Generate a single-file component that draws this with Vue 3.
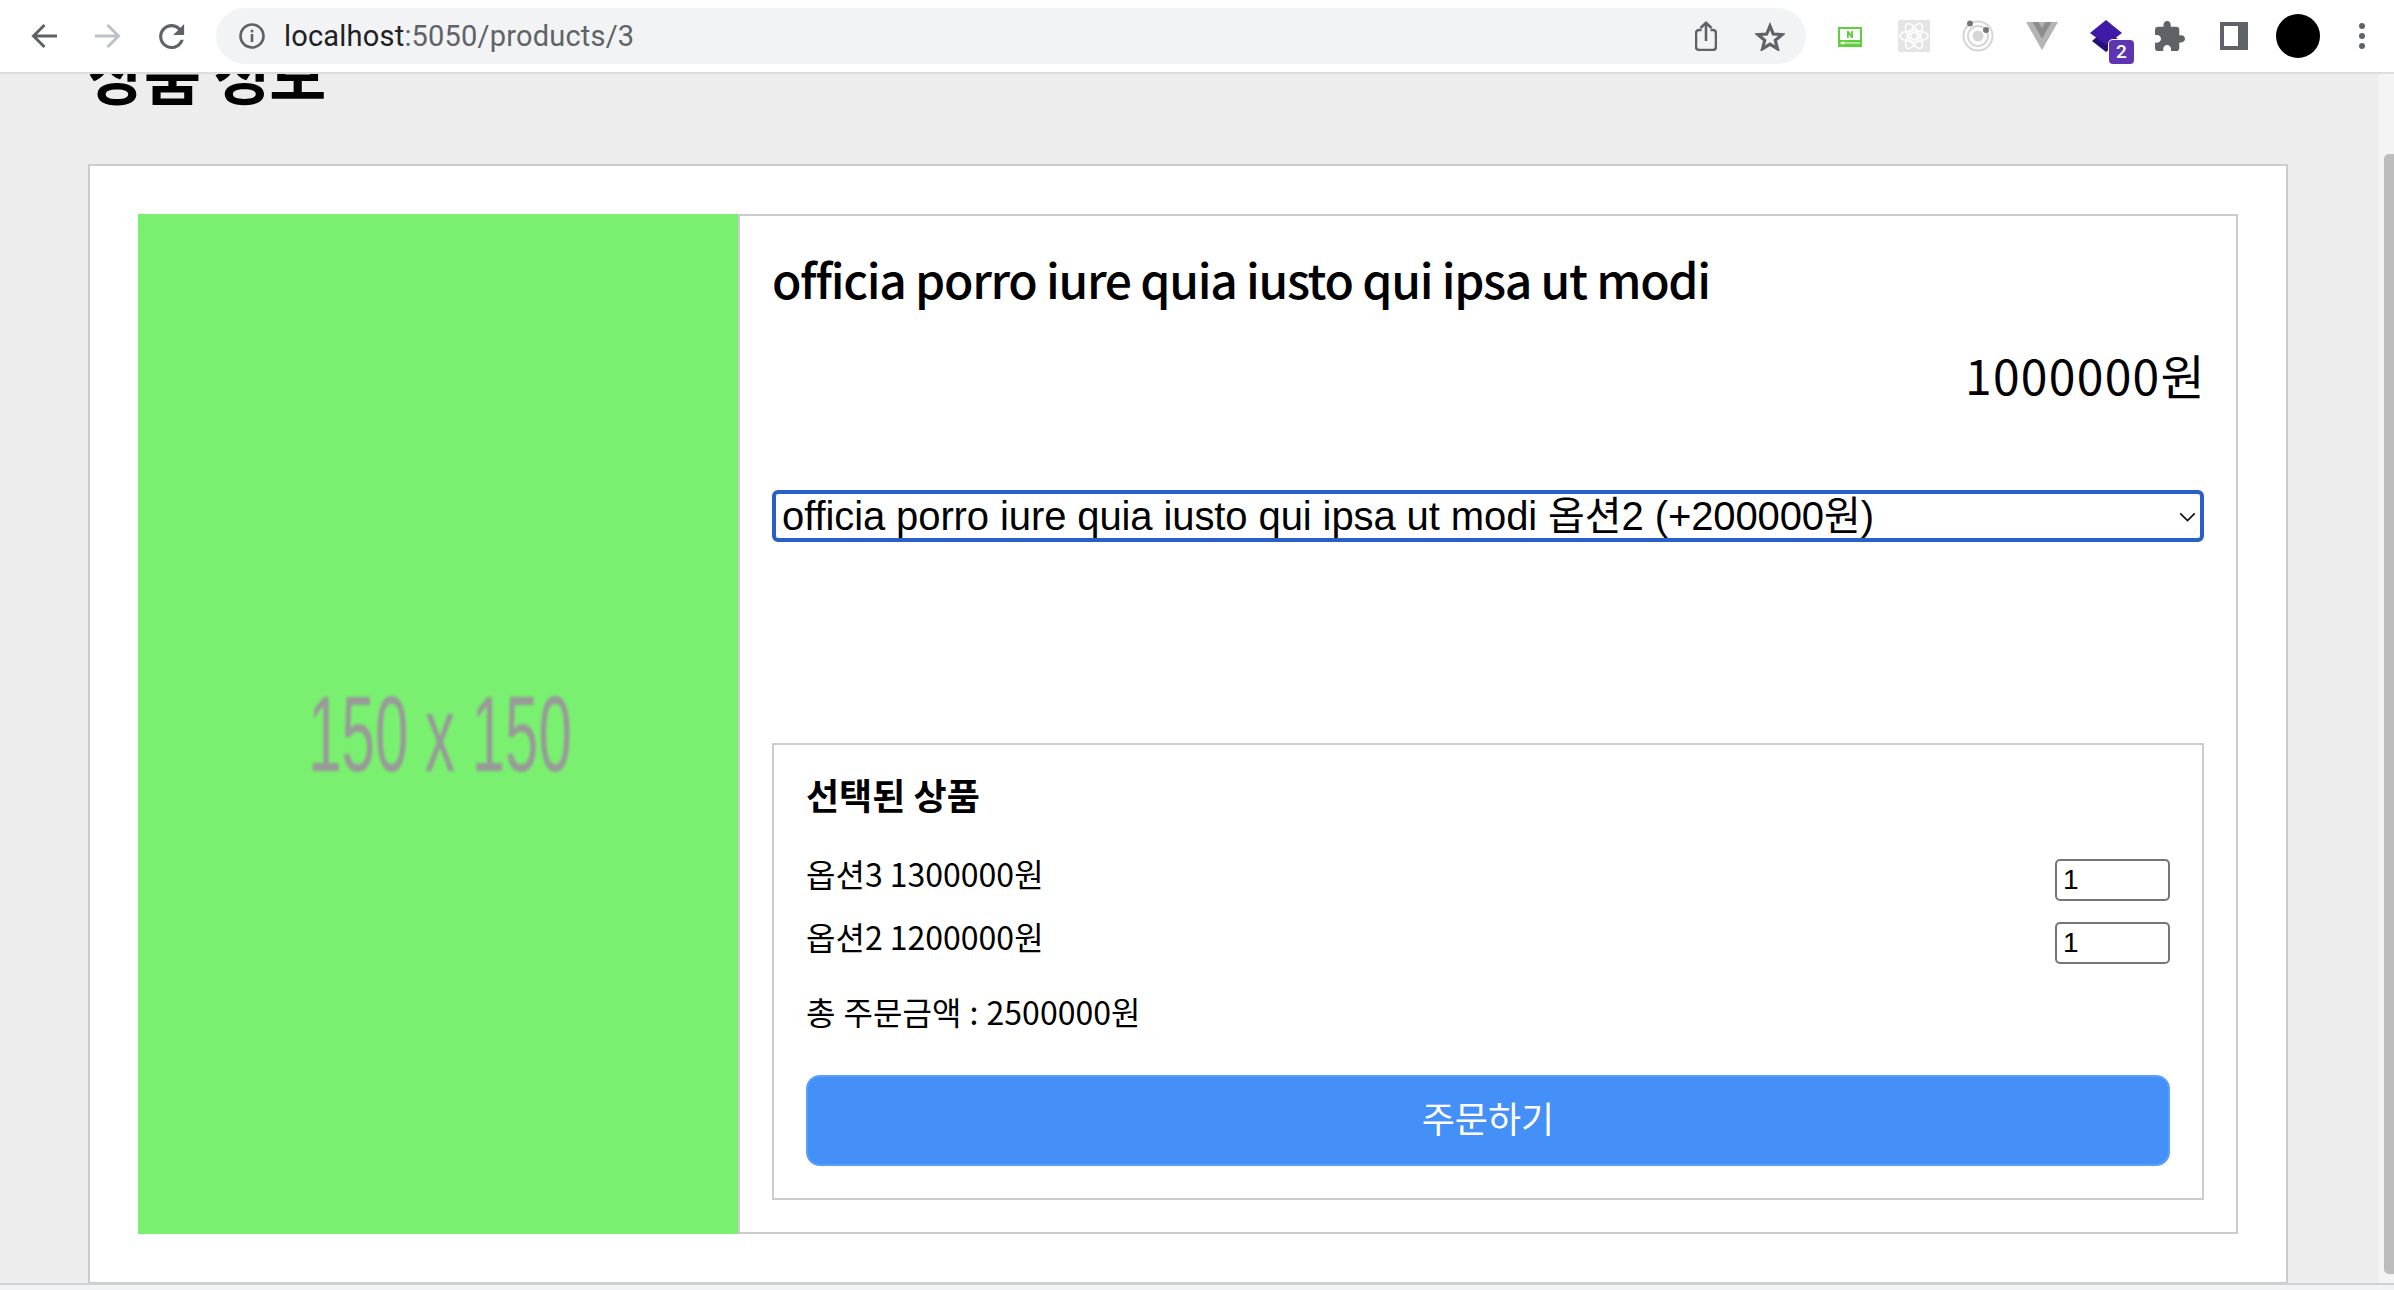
<script setup>
const rows = [
  { name: '옵션3 1300000원', qty: 1 },
  { name: '옵션2 1200000원', qty: 1 },
]
</script>

<template>
  <div class="app">
    <header class="toolbar">
      <div class="nav">
        <svg class="ic-arrow" viewBox="0 0 26 26"><path d="M26 13H3M13.500 2 2.500 13l11 11" fill="none" stroke="#5f6368" stroke-width="3"/></svg>
        <svg class="ic-arrow" viewBox="0 0 26 26"><path d="M0 13h23M12.500 2l11 11-11 11" fill="none" stroke="#bdc1c6" stroke-width="3"/></svg>
        <svg class="ic-reload" viewBox="4 4 16.500 16"><path fill="#5f6368" d="M17.650 6.350C16.200 4.900 14.210 4 12 4c-4.420 0-7.990 3.580-7.990 8s3.570 8 7.990 8c3.730 0 6.840-2.550 7.730-6h-2.080c-.82 2.330-3.040 4-5.650 4-3.310 0-6-2.690-6-6s2.690-6 6-6c1.660 0 3.140.69 4.220 1.780L13 11h7V4l-2.350 2.350z"/></svg>
      </div>
      <div class="omnibox">
        <svg class="ic-info" viewBox="0 0 26 26"><circle cx="13" cy="13" r="11.500" fill="none" stroke="#5f6368" stroke-width="2.600"/><rect x="11.700" y="11" width="2.600" height="8" fill="#5f6368"/><rect x="11.700" y="6.800" width="2.600" height="2.600" fill="#5f6368"/></svg>
        <span class="url"><span class="host">localhost</span>:5050/products/3</span>
        <svg class="ic-share" viewBox="0 0 22 30"><path d="M6.500 9H4a3 3 0 0 0-3 3v14a3 3 0 0 0 3 3h14a3 3 0 0 0 3-3V12a3 3 0 0 0-3-3h-2.500M11 20V2M5.500 7 11 1.800 16.500 7" fill="none" stroke="#5f6368" stroke-width="2.600"/></svg>
        <svg class="ic-star" viewBox="0 0 30 29"><path d="M15 4l3.300 8 8.900.6-6.900 5.700 2.200 8.500-7.500-4.700-7.500 4.700 2.200-8.500-6.900-5.700 8.900-.6z" fill="none" stroke="#5f6368" stroke-width="3.200"/></svg>
      </div>
      <div class="extensions">
        <svg class="ic-naver" viewBox="0 0 24 20"><rect x="1" y="1" width="22" height="18" fill="#fff" stroke="#5fcf3e" stroke-width="2"/><rect x="0" y="13" width="24" height="7" fill="#5fcf3e"/><rect x="2" y="15.500" width="20" height="1" fill="#fff"/><circle cx="5" cy="16" r="1.500" fill="#fff"/><path d="M9 11V4h1.800l2.400 3.600V4H15v7h-1.800l-2.400-3.600V11z" fill="#5fcf3e"/></svg>
        <svg class="ic-ext" viewBox="0 0 32 32"><rect width="32" height="32" rx="2" fill="#e4e4e4"/><g fill="none" stroke="#fff" stroke-width="1.600"><ellipse cx="16" cy="16" rx="14" ry="5.500"/><ellipse cx="16" cy="16" rx="14" ry="5.500" transform="rotate(60 16 16)"/><ellipse cx="16" cy="16" rx="14" ry="5.500" transform="rotate(120 16 16)"/><circle cx="16" cy="16" r="3.500"/></g></svg>
        <svg class="ic-ext" viewBox="0 0 32 32"><circle cx="16" cy="16" r="14.500" fill="none" stroke="#d6d6d6" stroke-width="2"/><circle cx="16" cy="16" r="10" fill="none" stroke="#d6d6d6" stroke-width="2"/><circle cx="16" cy="16" r="5.500" fill="#d6d6d6"/><circle cx="8" cy="3.500" r="3" fill="#777"/><circle cx="24" cy="10" r="3" fill="#777"/></svg>
        <svg class="ic-vue" viewBox="0 0 32 28"><path d="M0 0h32L16 28z" fill="#b4b4b4"/><path d="M6.500 0h6L16 6l3.500-6h6L16 16.500z" fill="#8d8d8d"/></svg>
        <div class="ic-apollo">
          <svg viewBox="0 0 32 32"><path d="M16 9 30 21 16 32 2 21z" fill="#24107c"/><path d="M16 0 32 13 16 25 0 13z" fill="#3f1aa6"/></svg>
          <span class="badge">2</span>
        </div>
        <svg class="ic-puzzle" viewBox="2 1 21 21"><path fill="#5f6368" d="M20.500 11H19V7c0-1.100-.9-2-2-2h-4V3.500C13 2.120 11.880 1 10.500 1S8 2.120 8 3.500V5H4c-1.100 0-1.990.9-1.990 2v3.800H3.500c1.490 0 2.700 1.210 2.700 2.700s-1.210 2.700-2.700 2.700H2V20c0 1.100.9 2 2 2h3.800v-1.500c0-1.490 1.210-2.700 2.700-2.700 1.490 0 2.700 1.210 2.700 2.700V22H17c1.100 0 2-.9 2-2v-4h1.500c1.380 0 2.500-1.120 2.500-2.500S21.880 11 20.500 11z"/></svg>
        <div class="ic-panel"></div>
        <div class="avatar"></div>
        <div class="kebab"><i></i><i></i><i></i></div>
      </div>
    </header>

    <main class="viewport">
      <div class="page">
        <h1 class="heading">상품 정보</h1>
        <section class="panel">
          <div class="card">
            <div class="thumb"><span class="thumb-text">150 x 150</span></div>
            <div class="detail">
              <h2 class="title">officia porro iure quia iusto qui ipsa ut modi</h2>
              <p class="price">1000000원</p>
              <div class="select-wrap">
                <select class="select">
                  <option>officia porro iure quia iusto qui ipsa ut modi 옵션2 (+200000원)</option>
                </select>
                <svg class="chevron" viewBox="0 0 14 8"><path d="M1 1l6 6 6-6" fill="none" stroke="#111" stroke-width="1.400"/></svg>
              </div>
              <div class="selected">
                <h3 class="selected-title">선택된 상품</h3>
                <div v-for="row in rows" :key="row.name" class="row">
                  <span class="row-name">{{ row.name }}</span>
                  <input class="qty" type="text" :value="row.qty" />
                </div>
                <p class="total">총 주문금액 : 2500000원</p>
                <button class="order" type="button">주문하기</button>
              </div>
            </div>
          </div>
        </section>
      </div>
      <div class="scrollbar"><div class="thumbbar"></div></div>
    </main>
    <div class="bottom-edge"></div>
  </div>
</template>

<style>
html, body { margin: 0; padding: 0; overflow: hidden; }
</style>

<style scoped>
.app {
  width: 2394px;
  height: 1290px;
  display: flex;
  flex-direction: column;
  overflow: hidden;
  background: #ededed;
  font-family: "Noto Sans CJK KR", "Noto Sans", sans-serif;
  color: #000;
}
.toolbar {
  height: 72px;
  flex: none;
  display: flex;
  align-items: center;
  background: #fff;
  border-bottom: 2px solid #dadce0;
}
.nav { display: flex; align-items: center; width: 216px; padding-left: 31px; box-sizing: border-box; gap: 38px; }
.ic-arrow { width: 26px; height: 26px; }
.ic-reload { width: 26px; height: 25px; }
.omnibox {
  width: 1590px;
  height: 56px;
  display: flex;
  align-items: center;
  background: #f1f3f4;
  border-radius: 28px;
  padding: 0 21px 0 23px;
  box-sizing: border-box;
}
.ic-info { width: 26px; height: 26px; flex: none; }
.url { margin-left: 19px; flex: 1; font: 400 29px Roboto, sans-serif; color: #5f6368; letter-spacing: 0.2px; }
.host { color: #202124; }
.ic-share { width: 22px; height: 30px; margin-right: 38px; }
.ic-star { width: 30px; height: 29px; }
.extensions { display: flex; align-items: center; flex: 1; position: relative; height: 72px; }
.extensions > * { position: absolute; }
.ic-naver { left: 32px; top: 27px; width: 24px; height: 20px; }
.ic-ext { top: 20px; width: 32px; height: 32px; }
.ic-ext:nth-child(2) { left: 92px; }
.ic-ext:nth-child(3) { left: 156px; }
.ic-vue { left: 220px; top: 22px; width: 32px; height: 28px; }
.ic-apollo { left: 284px; top: 20px; width: 32px; height: 32px; }
.ic-apollo svg { display: block; width: 32px; height: 32px; }
.badge {
  position: absolute;
  left: 19px;
  top: 20px;
  width: 25px;
  height: 24px;
  border-radius: 4px;
  background: #5e35b1;
  box-shadow: 0 0 0 1px #fff;
  color: #fff;
  font: 500 19px/24px Roboto, sans-serif;
  text-align: center;
}
.ic-puzzle { left: 349px; top: 21px; width: 30px; height: 30px; }
.ic-panel {
  left: 414px;
  top: 22px;
  width: 14px;
  height: 20px;
  background: #fff;
  border: solid #5f6368;
  border-width: 4px 10px 4px 4px;
}
.avatar { left: 470px; top: 14px; width: 44px; height: 44px; border-radius: 50%; background: #000; }
.kebab { left: 553px; top: 23px; display: flex; flex-direction: column; gap: 4px; }
.kebab i { display: block; width: 6px; height: 6px; border-radius: 50%; background: #5f6368; }

.viewport { flex: 1; min-height: 0; position: relative; overflow: hidden; }
.page { padding: 0 106px 0 88px; }
.heading {
  margin: -47px 0 0;
  height: 137px;
  font-size: 62px;
  line-height: 92px;
  letter-spacing: -1px;
  font-weight: 700;
}
.panel {
  background: #fff;
  border: 2px solid #ccc;
  padding: 48px;
}
.card { display: flex; height: 1020px; }
.thumb {
  width: 600px;
  flex: none;
  background: #79f06f;
  display: flex;
  align-items: center;
  justify-content: center;
}
.thumb-text {
  font: 400 60px "Liberation Sans", Arial, sans-serif;
  color: #999;
  transform: translateX(2px) translateY(10px) scaleY(1.78);
  filter: blur(0.8px);
  white-space: nowrap;
}
.detail {
  flex: 1;
  border: 2px solid #ccc;
  padding: 32px;
  display: flex;
  flex-direction: column;
}
.title { margin: -5px 0 0; font-size: 48px; line-height: 70px; font-weight: 500; letter-spacing: -1.300px; }
.price { margin: 26px -2px 0 0; font-size: 48px; line-height: 70px; font-weight: 400; text-align: right; letter-spacing: 1.300px; }
.select-wrap { position: relative; margin-top: 81px; }
.select {
  display: block;
  width: 100%;
  height: 52px;
  appearance: none;
  background: #fff;
  border: 4px solid #2a5fc8;
  border-radius: 6px;
  padding: 0 40px 0 6px;
  font: 400 40px "Liberation Sans", "Noto Sans CJK KR", sans-serif;
  letter-spacing: -0.100px;
  color: #000;
  outline: none;
}
.chevron { position: absolute; right: 8px; top: 22px; width: 17px; height: 10px; }
.selected {
  margin-top: auto;
  border: 2px solid #ccc;
  padding: 32px;
  display: flex;
  flex-direction: column;
}
.selected-title { margin: -9px 0 39px; font-size: 36px; line-height: 52px; font-weight: 700; }
.row { display: flex; justify-content: space-between; align-items: flex-start; margin-bottom: 21px; height: 42px; }
.row-name { font-size: 32px; line-height: 46px; margin-top: -9px; }
.qty {
  width: 115px;
  height: 42px;
  box-sizing: border-box;
  border: 2px solid #767676;
  border-radius: 5px;
  padding: 0 6px;
  background: #fff;
  font: 400 28px "Liberation Sans", sans-serif;
  color: #000;
  outline: none;
}
.total { margin: 0; font-size: 32px; line-height: 46px; padding-top: 3px; word-spacing: 1px; }
.order {
  margin-top: 41px;
  height: 91px;
  padding: 0 0 8px;
  border: 2px solid #57a0f8;
  border-radius: 14px;
  background: #4590f8;
  color: #fff;
  font: 400 36px "Noto Sans CJK KR", sans-serif;
}
.scrollbar { position: absolute; right: 0; top: 0; bottom: 0; width: 16px; background: #f4f4f4; }
.thumbbar { position: absolute; right: 0; top: 80px; bottom: 9px; width: 10px; border-radius: 5px 0 0 5px; background: #bdbdbd; }
.bottom-edge { flex: none; height: 7px; background: #f1f3f4; border-top: 2px solid #cfd0d4; box-sizing: border-box; }
</style>
